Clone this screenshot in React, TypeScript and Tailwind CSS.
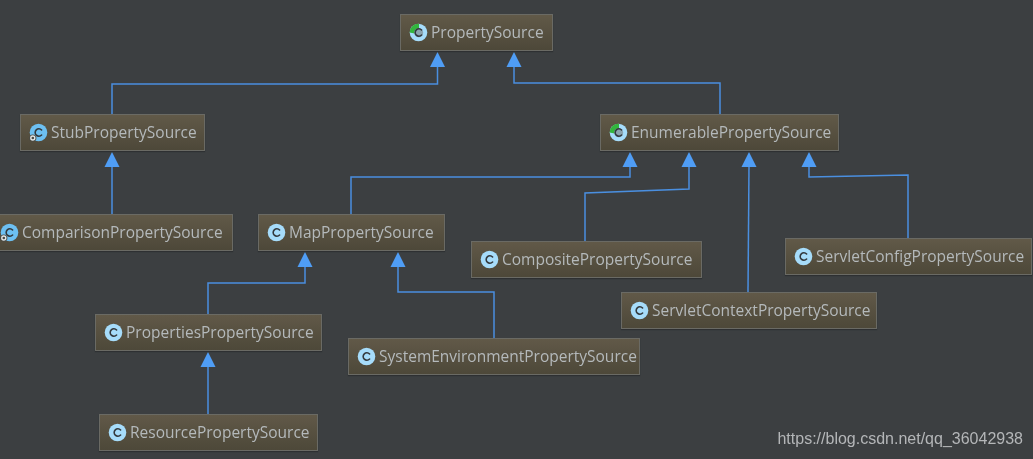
const NODES = [
  { name: "PropertySource", x: 400, y: 14, w: 153, kind: "abstract" },
  { name: "StubPropertySource", x: 20, y: 114, w: 185, kind: "stub" },
  { name: "ComparisonPropertySource", x: -9, y: 214, w: 242, kind: "stub" },
  { name: "EnumerablePropertySource", x: 600, y: 114, w: 239, kind: "abstract" },
  { name: "MapPropertySource", x: 258, y: 214, w: 187, kind: "class" },
  { name: "CompositePropertySource", x: 471, y: 241, w: 231, kind: "class" },
  { name: "ServletConfigPropertySource", x: 785, y: 238, w: 247, kind: "class" },
  { name: "ServletContextPropertySource", x: 621, y: 292, w: 256, kind: "class" },
  { name: "PropertiesPropertySource", x: 95, y: 314, w: 227, kind: "class" },
  { name: "SystemEnvironmentPropertySource", x: 348, y: 338, w: 292, kind: "class" },
  { name: "ResourcePropertySource", x: 99, y: 414, w: 219, kind: "class" },
];

const EDGES = [
  "M112 114V84H437.5V66",
  "M720 114V83H514V66",
  "M112 214V166",
  "M351 214V177H630V166",
  "M585 241V193L689 189V166",
  "M748 292L749 166",
  "M908 238V175L809 177V166",
  "M208 314V283H305V266",
  "M494 338V292H398V266",
  "M208 414V366",
];

const ARROWS = [
  [437.5, 52],
  [514, 52],
  [112, 152],
  [630, 152],
  [689, 152],
  [749, 152],
  [809, 152],
  [305, 252],
  [398, 252],
  [208, 352],
];

function ClassIcon({ kind }: { kind: string }) {
  return (
    <svg width="19" height="19" viewBox="0 0 19 19" className="shrink-0">
      <circle cx="9.5" cy="9.5" r="8.8" fill={kind === "stub" ? "#6dc0f2" : "#a6dcfa"} />
      {kind === "abstract" && <path d="M10 .7A8.8 8.8 0 0 0 .7 9.5L5.5 10.5A4 4 0 0 1 10 5.5Z" fill="#33b53c" />}
      {kind === "abstract" && <circle cx="9.8" cy="9.8" r="4.4" fill="#8ba3af" />}
      <path
        d="M12.6 7A3.7 3.7 0 1 0 12.6 12"
        fill="none"
        stroke="#33393d"
        strokeWidth="1.6"
        strokeLinecap="round"
      />
      {kind === "stub" && (
        <>
          <circle cx="3.8" cy="15" r="3.6" fill="#4a4a44" />
          <circle cx="3.8" cy="15" r="2" fill="none" stroke="#e2e6e8" strokeWidth="1.4" />
        </>
      )}
    </svg>
  );
}

export default function App() {
  return (
    <div className="relative h-[459px] w-[1033px] overflow-hidden bg-[#3c3f41] font-['Open_Sans',sans-serif]">
      <div className="absolute inset-0 blur-[0.4px]">
        <svg width="1033" height="459" className="absolute left-0 top-0">
          {EDGES.map((d) => (
            <path d={d} key={d} fill="none" stroke="#4a8fe0" strokeWidth="1.5" />
          ))}
          {ARROWS.map(([x, y]) => (
            <polygon points={`${x},${y} ${x - 7.5},${y + 15} ${x + 7.5},${y + 15}`} fill="#4f9df5" key={`${x}-${y}`} />
          ))}
        </svg>

        {NODES.map((node) => (
          <div
            className="absolute flex h-[37px] items-center gap-[3px] border border-[#6a6a64] bg-gradient-to-b from-[#615948] to-[#4d4839] pl-[8px] text-[15.5px] text-[#b4b9bb] shadow-[0_1px_1px_#2e3032]"
            style={{ left: node.x, top: node.y, width: node.w }}
            key={node.name}
          >
            <ClassIcon kind={node.kind} />
            <span className="whitespace-nowrap">{node.name}</span>
          </div>
        ))}

        <div className="absolute bottom-[10px] right-[10px] font-['Liberation_Sans',sans-serif] text-[16px] leading-[20px] text-[#b4b6b8]">
          https://blog.csdn.net/qq_36042938
        </div>
      </div>
    </div>
  );
}
